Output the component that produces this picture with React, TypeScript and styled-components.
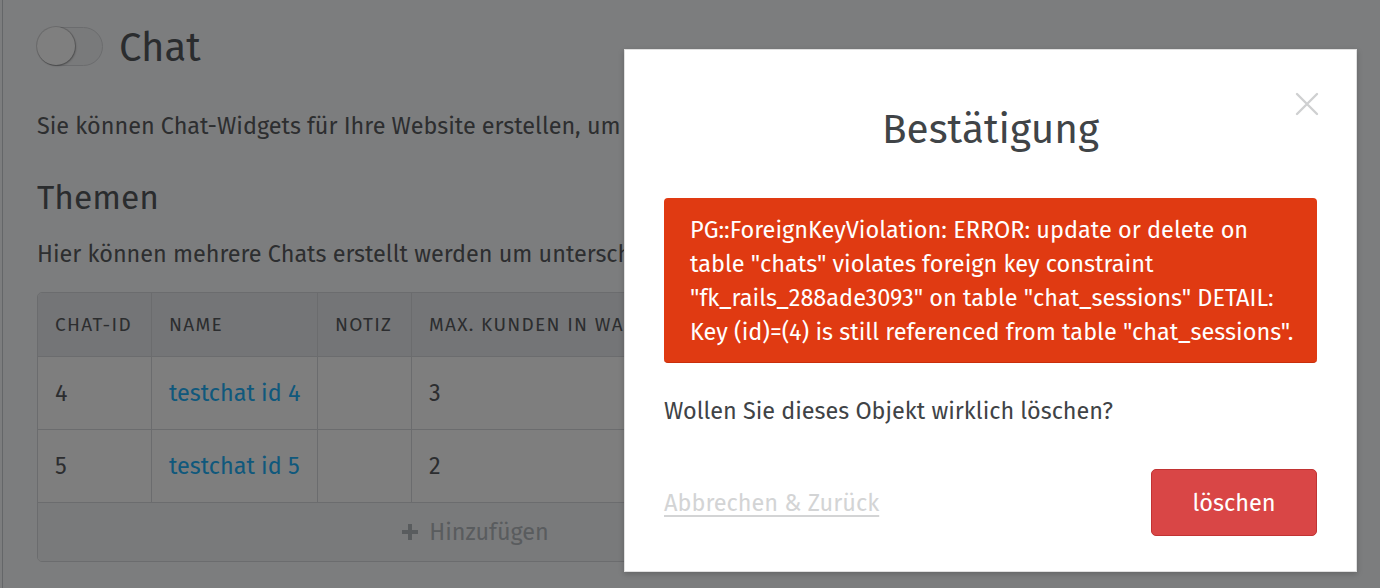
import React from "react";
import styled, { createGlobalStyle } from "styled-components";

const GlobalStyle = createGlobalStyle`
  html, body {
    margin: 0;
    padding: 0;
    background: #f9fafc;
    font-family: "Fira Sans", "Open Sans", "Noto Sans", sans-serif;
    color: #55585c;
  }
`;

const Page = styled.div`
  position: relative;
  width: 1380px;
  height: 588px;
  overflow: hidden;
`;

const Content = styled.main`
  margin-left: 2px;
  height: 100%;
  border-left: 1px solid #c9ccd0;
  padding: 22px 0 0 34px;
  box-sizing: border-box;
`;

const TitleRow = styled.div`
  display: flex;
  align-items: center;
  gap: 16px;
`;

const Toggle = styled.div`
  position: relative;
  width: 64px;
  height: 37px;
  border-radius: 20px;
  border: 1px solid #d6d9dc;
  background: #f3f4f6;
  &::after {
    content: "";
    position: absolute;
    left: -1px;
    top: -1px;
    width: 38px;
    height: 38px;
    border-radius: 50%;
    background: #fff;
    box-shadow: 0 0 0 1px rgba(0, 0, 0, 0.14), 1px 1px 2px rgba(0, 0, 0, 0.25);
  }
`;

const PageTitle = styled.h1`
  margin: 0;
  padding-top: 4px;
  font-size: 40px;
  font-weight: 400;
  color: #55585c;
  line-height: 44px;
`;

const Paragraph = styled.p<{ $top: number }>`
  margin: ${(p) => p.$top}px 0 0;
  font-size: 23.4px;
  line-height: 30px;
  white-space: nowrap;
  color: #5a5d60;
`;

const SectionTitle = styled.h2`
  margin: 37px 0 0;
  font-size: 33.5px;
  font-weight: 400;
  line-height: 40px;
  color: #55585c;
`;

const Table = styled.div`
  margin-top: 23px;
  width: 874px;
  border: 1px solid #d6d9dc;
  border-radius: 5px;
  overflow: hidden;
  background: #fcfcfd;
`;

const Row = styled.div<{ $head?: boolean }>`
  display: grid;
  grid-template-columns: 114px 166px 94px 1fr;
  height: ${(p) => (p.$head ? 63 : 72)}px;
  background: ${(p) => (p.$head ? "#e9ebee" : "#fcfcfd")};
  border-bottom: 1px solid #d6d9dc;
`;

const Cell = styled.div<{ $head?: boolean; $link?: boolean }>`
  display: flex;
  align-items: center;
  padding-left: 17px;
  border-right: 1px solid #d6d9dc;
  font-size: ${(p) => (p.$head ? "19px" : "23.4px")};
  letter-spacing: ${(p) => (p.$head ? "1.3px" : "0")};
  text-transform: ${(p) => (p.$head ? "uppercase" : "none")};
  color: ${(p) => (p.$link ? "#20b1f8" : "#585b5f")};
  white-space: nowrap;
  overflow: hidden;
  &:last-child {
    border-right: none;
  }
`;

const AddRow = styled.div`
  height: 58px;
  display: flex;
  align-items: center;
  justify-content: center;
  gap: 10px;
  background: #f3f4f6;
  font-size: 23.4px;
  color: #b3b8bd;
`;

const Backdrop = styled.div`
  position: absolute;
  inset: 0;
  background: rgba(0, 0, 0, 0.5);
`;

const Modal = styled.section`
  position: absolute;
  left: 624px;
  top: 49px;
  width: 733px;
  height: 523px;
  box-sizing: border-box;
  background: #fff;
  border: 1px solid rgba(0, 0, 0, 0.12);
  box-shadow: 0 2px 6px rgba(0, 0, 0, 0.2);
  padding: 0 39px;
  display: flex;
  flex-direction: column;
`;

const CloseButton = styled.button`
  position: absolute;
  right: 37px;
  top: 42px;
  width: 24px;
  height: 24px;
  padding: 0;
  border: none;
  background: none;
  cursor: pointer;
`;

const ModalTitle = styled.h2`
  margin: 52px 0 0;
  text-align: center;
  font-size: 40.5px;
  font-weight: 400;
  line-height: 56px;
  color: #404447;
`;

const ErrorBox = styled.div`
  margin-top: 40px;
  height: 165px;
  box-sizing: border-box;
  background: #e03a12;
  border-radius: 4px;
  border-bottom: 1px solid #c92e0b;
  padding: 15px 26px;
  color: #fff;
  font-size: 23.5px;
  line-height: 34px;
  white-space: nowrap;
`;

const Question = styled.p`
  margin: 33px 0 0;
  font-size: 23.4px;
  line-height: 30px;
  color: #404346;
`;

const Footer = styled.div`
  margin-top: 43px;
  display: flex;
  align-items: center;
  justify-content: space-between;
`;

const CancelLink = styled.a`
  font-size: 23.5px;
  color: #d3d4d5;
  text-decoration: underline;
  text-underline-offset: 4px;
  cursor: pointer;
`;

const DangerButton = styled.button`
  width: 166px;
  height: 67px;
  border-radius: 5px;
  border: 1px solid #c13333;
  background: #d94646;
  color: #fff;
  font-family: inherit;
  font-size: 23.5px;
  cursor: pointer;
`;

const rows = [
  { id: "4", name: "testchat id 4", note: "", max: "3" },
  { id: "5", name: "testchat id 5", note: "", max: "2" },
];

export default function App(): JSX.Element {
  return (
    <Page>
      <GlobalStyle />
      <Content>
        <TitleRow>
          <Toggle />
          <PageTitle>Chat</PageTitle>
        </TitleRow>
        <Paragraph $top={41}>
          Sie können Chat-Widgets für Ihre Website erstellen, um Ihren Kunden einen direkten Kontakt zu ermöglichen.
        </Paragraph>
        <SectionTitle>Themen</SectionTitle>
        <Paragraph $top={21}>
          Hier können mehrere Chats erstellt werden um unterschiedliche Themen zu behandeln.
        </Paragraph>
        <Table>
          <Row $head>
            <Cell $head>Chat-ID</Cell>
            <Cell $head>Name</Cell>
            <Cell $head>Notiz</Cell>
            <Cell $head>Max. Kunden in Warteschlange</Cell>
          </Row>
          {rows.map((r) => (
            <Row key={r.id}>
              <Cell>{r.id}</Cell>
              <Cell $link>{r.name}</Cell>
              <Cell>{r.note}</Cell>
              <Cell>{r.max}</Cell>
            </Row>
          ))}
          <AddRow>
            <svg width="18" height="18" viewBox="0 0 18 18">
              <path d="M9 1v16M1 9h16" stroke="#b3b8bd" strokeWidth="4" />
            </svg>
            Hinzufügen
          </AddRow>
        </Table>
      </Content>
      <Backdrop />
      <Modal>
        <CloseButton aria-label="close">
          <svg width="24" height="24" viewBox="0 0 24 24">
            <path d="M2 2l20 20M22 2L2 22" stroke="#cfd0d1" strokeWidth="2.4" strokeLinecap="round" />
          </svg>
        </CloseButton>
        <ModalTitle>Bestätigung</ModalTitle>
        <ErrorBox>
          PG::ForeignKeyViolation: ERROR: update or delete on
          <br />
          table "chats" violates foreign key constraint
          <br />
          "fk_rails_288ade3093" on table "chat_sessions" DETAIL:
          <br />
          Key (id)=(4) is still referenced from table "chat_sessions".
        </ErrorBox>
        <Question>Wollen Sie dieses Objekt wirklich löschen?</Question>
        <Footer>
          <CancelLink>Abbrechen &amp; Zurück</CancelLink>
          <DangerButton>löschen</DangerButton>
        </Footer>
      </Modal>
    </Page>
  );
}
